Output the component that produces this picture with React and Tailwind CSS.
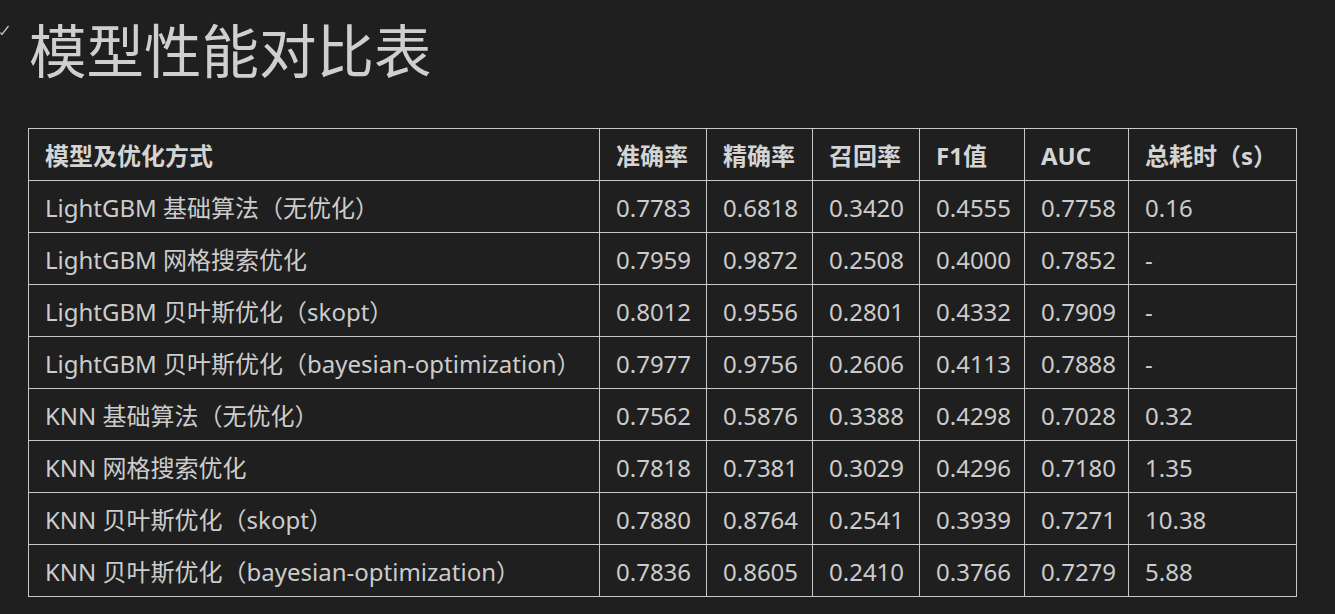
import React from "react";

const rows = [
  ["LightGBM 基础算法（无优化）", "0.7783", "0.6818", "0.3420", "0.4555", "0.7758", "0.16"],
  ["LightGBM 网格搜索优化", "0.7959", "0.9872", "0.2508", "0.4000", "0.7852", "-"],
  ["LightGBM 贝叶斯优化（skopt）", "0.8012", "0.9556", "0.2801", "0.4332", "0.7909", "-"],
  ["LightGBM 贝叶斯优化（bayesian-optimization）", "0.7977", "0.9756", "0.2606", "0.4113", "0.7888", "-"],
  ["KNN 基础算法（无优化）", "0.7562", "0.5876", "0.3388", "0.4298", "0.7028", "0.32"],
  ["KNN 网格搜索优化", "0.7818", "0.7381", "0.3029", "0.4296", "0.7180", "1.35"],
  ["KNN 贝叶斯优化（skopt）", "0.7880", "0.8764", "0.2541", "0.3939", "0.7271", "10.38"],
  ["KNN 贝叶斯优化（bayesian-optimization）", "0.7836", "0.8605", "0.2410", "0.3766", "0.7279", "5.88"],
];

const headers = ["模型及优化方式", "准确率", "精确率", "召回率", "F1值", "AUC", "总耗时（s）"];
const widths = ["w-[571px]", "w-[107px]", "w-[106px]", "w-[107px]", "w-[105px]", "w-[104px]", "w-[168px]"];

function App() {
  return (
    <div
      className="min-h-screen w-full bg-[#1f1f1f] text-[#cccccc] pl-[28px] pt-[10px]"
      style={{ fontFamily: '"Noto Sans", "Noto Sans CJK SC", sans-serif' }}
    >
      <div className="relative">
        <svg className="absolute left-[-28px] top-[14px]" width="10" height="12" viewBox="0 0 10 12">
          <polyline points="0.5,8.5 2,10.5 8.5,2" fill="none" stroke="#c4c4c4" strokeWidth="1.3" />
        </svg>
        <h1 className="text-[57.5px] leading-[82px] font-normal pl-[1px] text-[#cfcfcf]">模型性能对比表</h1>
      </div>
      <table className="mt-[36px] table-fixed border-collapse w-[1269px] text-[24px]">
        <colgroup>
          {widths.map((w, i) => (
            <col key={i} className={w} />
          ))}
        </colgroup>
        <thead>
          <tr className="h-[52px]">
            {headers.map((h, i) => (
              <th key={i} className="border border-[#c8c8c8] px-4 pt-[2px] text-left font-bold text-[#d4d4d4] whitespace-nowrap">
                {h}
              </th>
            ))}
          </tr>
        </thead>
        <tbody>
          {rows.map((r, i) => (
            <tr key={i} className="h-[52px]">
              {r.map((c, j) => (
                <td key={j} className="border border-[#c8c8c8] px-4 pt-[2px] text-left whitespace-nowrap">
                  {c}
                </td>
              ))}
            </tr>
          ))}
        </tbody>
      </table>
    </div>
  );
}

export default App;
